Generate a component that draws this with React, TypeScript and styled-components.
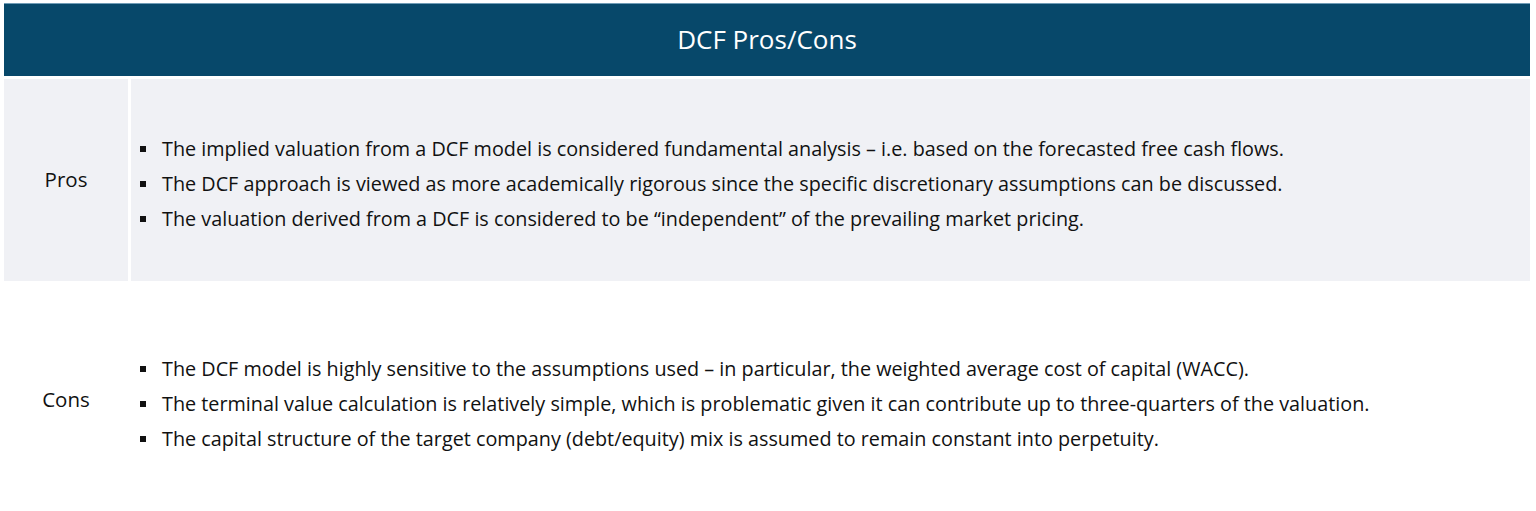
import styled, { createGlobalStyle } from "styled-components";

const GlobalStyle = createGlobalStyle`
    html, body {
        margin: 0;
        padding: 0;
        background: #ffffff;
        overflow: hidden;
    }
    body {
        font-family: "Open Sans", "DejaVu Sans", sans-serif;
        color: #111111;
    }
`;

const pros = [
    "The implied valuation from a DCF model is considered fundamental analysis – i.e. based on the forecasted free cash flows.",
    "The DCF approach is viewed as more academically rigorous since the specific discretionary assumptions can be discussed.",
    "The valuation derived from a DCF is considered to be “independent” of the prevailing market pricing.",
];

const cons = [
    "The DCF model is highly sensitive to the assumptions used – in particular, the weighted average cost of capital (WACC).",
    "The terminal value calculation is relatively simple, which is problematic given it can contribute up to three-quarters of the valuation.",
    "The capital structure of the target company (debt/equity) mix is assumed to remain constant into perpetuity.",
];

const App = () => {
    return (
        <>
            <GlobalStyle />
            <Table>
                <Header>DCF Pros/Cons</Header>

                <Row $shaded $height={202}>
                    <Label $shaded>Pros</Label>
                    <Points $shaded>
                        {pros.map((text, i) => (
                            <Point key={i}>{text}</Point>
                        ))}
                    </Points>
                </Row>

                <Row $height={232}>
                    <Label>Cons</Label>
                    <Points>
                        {cons.map((text, i) => (
                            <Point key={i}>{text}</Point>
                        ))}
                    </Points>
                </Row>
            </Table>
        </>
    );
};

const Table = styled.div`
    display: flex;
    flex-direction: column;
    gap: 3px;
    padding: 3px 6px 0 4px;
`;

const Header = styled.div`
    height: 73px;
    box-sizing: border-box;
    display: flex;
    align-items: center;
    justify-content: center;
    background-color: #07486a;
    border-top: 1px solid #6f9cb6;
    color: #ffffff;
    font-size: 26px;
    padding-bottom: 2px;
`;

const Row = styled.div<{ $shaded?: boolean; $height: number }>`
    display: grid;
    grid-template-columns: 124px 1fr;
    column-gap: 3px;
    height: ${({ $height }) => $height}px;
    flex-shrink: 0;
`;

const Label = styled.div<{ $shaded?: boolean }>`
    display: flex;
    align-items: center;
    justify-content: center;
    background-color: ${({ $shaded }) => ($shaded ? "#f0f1f5" : "#ffffff")};
    font-size: 20.5px;
    padding-bottom: 2px;
`;

const Points = styled.ul<{ $shaded?: boolean }>`
    margin: 0;
    padding: 6px 0 0 31px;
    list-style: none;
    display: flex;
    flex-direction: column;
    justify-content: center;
    gap: 8px;
    background-color: ${({ $shaded }) => ($shaded ? "#f0f1f5" : "#ffffff")};
`;

const Point = styled.li`
    position: relative;
    font-size: 19.8px;
    line-height: 27px;
    white-space: nowrap;

    &::before {
        content: "";
        position: absolute;
        left: -22px;
        top: 11px;
        width: 6px;
        height: 6px;
        background-color: #111111;
    }
`;

export default App;
